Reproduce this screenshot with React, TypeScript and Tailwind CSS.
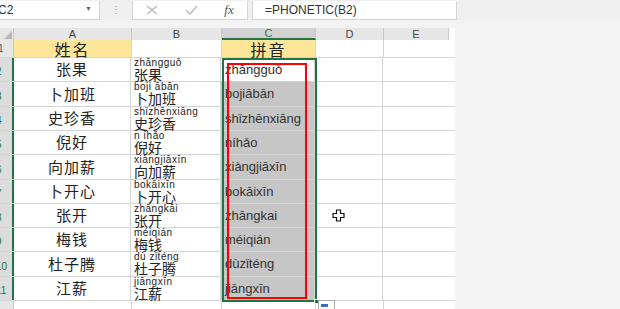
import React from "react";

const rows = [
  { name: "张果", py: "zhāngguǒ", ruby: "zhāngguǒ" },
  { name: "卜加班", py: "bojiābān", ruby: "boji ābān" },
  { name: "史珍香", py: "shǐzhēnxiāng", ruby: "shǐzhēnxiāng" },
  { name: "倪好", py: "níhǎo", ruby: "n íhǎo" },
  { name: "向加薪", py: "xiàngjiāxīn", ruby: "xiàngjiāxīn" },
  { name: "卜开心", py: "bokāixīn", ruby: "bokāixīn" },
  { name: "张开", py: "zhāngkai", ruby: "zhāngkāi" },
  { name: "梅钱", py: "méiqián", ruby: "méiqián" },
  { name: "杜子腾", py: "dùzǐténg", ruby: "dù zǐténg" },
  { name: "江薪", py: "jiāngxīn", ruby: "jiāngxīn" },
];

const rowHeights = ["h-[24px]", "h-[25px]", "h-[24px]", "h-[24px]", "h-[25px]", "h-[24px]", "h-[24px]", "h-[24px]", "h-[25px]", "h-[24px]"];

const font = "font-['Liberation_Sans','Noto_Sans_CJK_SC',sans-serif]";
const cjk = "font-['Noto_Sans_CJK_SC','Noto_Sans',sans-serif]";

function ColHeader({ label, w, active }: { label: string; w: string; active?: boolean }) {
  return (
    <div
      className={`${w} h-full flex items-center justify-center text-[11px] border-r border-[#c8c8c8] ${
        active ? "bg-[#d2d2d2] border-b-2 border-b-[#217346] text-[#217346]" : "bg-[#e6e6e6] text-[#444]"
      }`}
    >
      {label}
    </div>
  );
}

export default function App() {
  return (
    <div className={`w-[620px] h-[309px] overflow-hidden bg-[#f3f3f3] ${font} relative`}>
      {/* formula bar */}
      <div className="h-[20px] flex items-center bg-[#efefef]">
        <div className="w-[100px] h-[19px] bg-white border-r border-b border-[#d6d6d6] flex items-center justify-between pr-[7px]">
          <span className="text-[12px] text-[#333] -ml-[2px]">C2</span>
          <span className="text-[7px] text-[#666]">▼</span>
        </div>
        <div className="w-[32px] flex justify-center text-[#aaa] text-[10px] leading-none">⋮</div>
        <div className="w-[116px] h-[19px] bg-white border border-[#d6d6d6] border-t-0 flex items-center justify-around">
          <svg width="12" height="10" viewBox="0 0 12 10">
            <path d="M1 1 L11 9 M11 1 L1 9" stroke="#b8b8b8" strokeWidth="1.3" />
          </svg>
          <svg width="13" height="10" viewBox="0 0 13 10">
            <path d="M1 5 L5 9 L12 1" stroke="#b8b8b8" strokeWidth="1.3" fill="none" />
          </svg>
          <span className="font-['Liberation_Serif',serif] italic text-[13px] text-[#555]">fx</span>
        </div>
        <div className="w-[4px]" />
        <div className="w-[205px] h-[19px] bg-white border border-[#d6d6d6] border-t-0 flex items-center pl-[12px] text-[12px] text-[#333]">
          =PHONETIC(B2)
        </div>
      </div>
      <div className="h-[8px] bg-[#f3f3f3] w-[457px]" />

      {/* sheet */}
      <div className="w-[455px] bg-white">
        {/* column headers */}
        <div className="h-[12px] flex">
          <div className="w-[14px] h-full bg-[#e6e6e6] border-r border-[#c8c8c8] flex items-end justify-end pr-[1px] pb-[1px]">
            <div className="w-0 h-0 border-l-[8px] border-l-transparent border-b-[8px] border-b-[#b8b8b8]" />
          </div>
          <ColHeader label="A" w="w-[118px]" />
          <ColHeader label="B" w="w-[90px]" />
          <ColHeader label="C" w="w-[94px]" active />
          <ColHeader label="D" w="w-[68px]" />
          <ColHeader label="E" w="w-[65px]" />
        </div>

        {/* row 1 */}
        <div className="h-[18px] flex border-b border-[#d4d4d4]">
          <div className="w-[14px] bg-[#e6e6e6] border-r border-[#c8c8c8] text-[10px] text-[#555] flex items-center overflow-hidden">
            <span className="-ml-[2px]">1</span>
          </div>
          <div className={`w-[118px] bg-[#fde69a] border-r border-[#d4d4d4] flex items-center justify-center ${cjk} text-[16px] text-[#222] tracking-[2px]`}>姓名</div>
          <div className="w-[90px] border-r border-[#d4d4d4]" />
          <div className={`w-[94px] bg-[#fde69a] border-r border-[#d4d4d4] flex items-center justify-center ${cjk} text-[16px] text-[#222] tracking-[2px]`}>拼音</div>
          <div className="w-[68px] border-r border-[#d4d4d4]" />
          <div className="w-[65px]" />
        </div>

        {rows.map((r, i) => (
          <div key={i} className={`${rowHeights[i]} flex border-b border-[#d4d4d4]`}>
            <div className="w-[14px] bg-[#dcdcdc] border-r-2 border-[#217346] text-[10px] text-[#217346] flex items-end pb-[2px] overflow-hidden">
              <span className="-ml-[4px]">{i + 2}</span>
            </div>
            <div className={`w-[117px] border-r border-[#d4d4d4] flex items-center justify-center ${cjk} text-[15px] text-[#222] tracking-[1px]`}>{r.name}</div>
            <div className="w-[90px] border-r border-[#d4d4d4] flex flex-col justify-start pl-[3px] text-[#222]">
              <span className="text-[10px] leading-[9px] tracking-[0.5px]">{r.ruby}</span>
              <span className={`${cjk} text-[14px] leading-[14px]`}>{r.name}</span>
            </div>
            <div className={`w-[94px] border-r border-[#d4d4d4] flex items-center pl-[4px] text-[13px] text-[#333] ${i === 0 ? "bg-white" : "bg-[#c6c6c6]"}`}>
              {r.py}
            </div>
            <div className="w-[68px] border-r border-[#d4d4d4]" />
            <div className="w-[65px]" />
          </div>
        ))}

        {/* row 12 */}
        <div className="h-[10px] flex">
          <div className="w-[14px] bg-[#e6e6e6] border-r border-[#c8c8c8]" />
          <div className="w-[118px] border-r border-[#d4d4d4]" />
          <div className="w-[90px] border-r border-[#d4d4d4]" />
          <div className="w-[94px] border-r border-[#d4d4d4]" />
          <div className="w-[68px] border-r border-[#d4d4d4]" />
          <div className="w-[65px]" />
        </div>
      </div>

      {/* selection border C2:C11 */}
      <div className="absolute left-[222px] top-[58px] w-[95px] h-[244px] border-2 border-[#217346] pointer-events-none" />
      <div className="absolute left-[314px] top-[299px] w-[5px] h-[5px] bg-[#217346] border border-white" />

      {/* red annotation box */}
      <div className="absolute left-[227px] top-[63px] w-[80px] h-[236px] border-2 border-[#f00]" />

      {/* paste options */}
      <div className="absolute left-[318px] top-[300px] w-[17px] h-[10px] bg-white border border-[#aaa] flex items-center pl-[2px]">
        <div className="w-[7px] h-[3px] bg-[#2f6fd0]" />
      </div>

      {/* cursor */}
      <svg className="absolute left-[332px] top-[209px]" width="13" height="13" viewBox="0 0 13 13">
        <path d="M4.5 1 H8.5 V4.5 H12 V8.5 H8.5 V12 H4.5 V8.5 H1 V4.5 H4.5 Z" fill="white" stroke="#111" strokeWidth="1.2" />
      </svg>
    </div>
  );
}
